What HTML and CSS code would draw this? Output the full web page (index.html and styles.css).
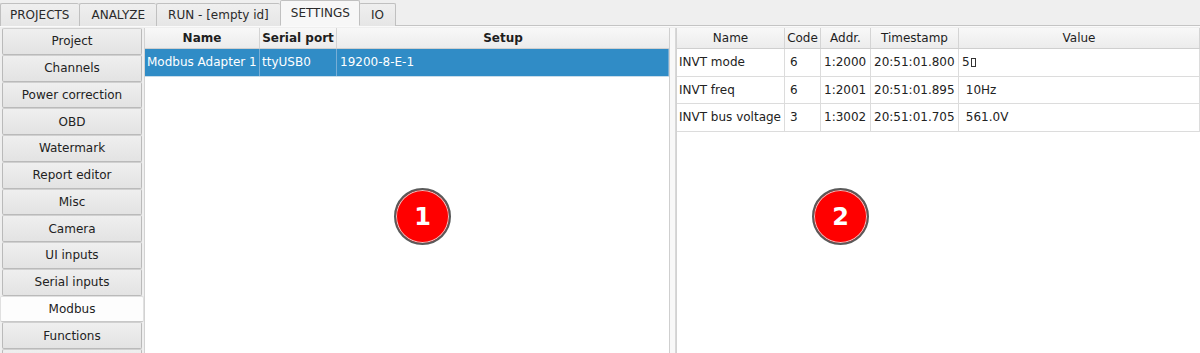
FILE: index.html
```html
<!DOCTYPE html>
<html>
<head>
<meta charset="utf-8">
<link rel="stylesheet" href="styles.css">
</head>
<body>
<div class="app">
  <div class="tabbar">
    <div class="tab first">PROJECTS</div>
    <div class="tab">ANALYZE</div>
    <div class="tab">RUN - [empty id]</div>
    <div class="tab active">SETTINGS</div>
    <div class="tab">IO</div>
  </div>
  <div class="main">
    <div class="sidebar">
      <div class="btn">Project</div>
      <div class="btn">Channels</div>
      <div class="btn">Power correction</div>
      <div class="btn">OBD</div>
      <div class="btn">Watermark</div>
      <div class="btn">Report editor</div>
      <div class="btn">Misc</div>
      <div class="btn">Camera</div>
      <div class="btn">UI inputs</div>
      <div class="btn">Serial inputs</div>
      <div class="btn sel">Modbus</div>
      <div class="btn">Functions</div>
      <div class="btn">&nbsp;</div>
    </div>
    <div class="pane left">
      <div class="row head bold">
        <div class="c l1">Name</div>
        <div class="c l2">Serial port</div>
        <div class="c l3">Setup</div>
      </div>
      <div class="row data selected">
        <div class="c l1">Modbus Adapter 1</div>
        <div class="c l2">ttyUSB0</div>
        <div class="c l3">19200-8-E-1</div>
      </div>
      <div class="badge b1">1</div>
    </div>
    <div class="splitter"></div>
    <div class="pane right">
      <div class="row head">
        <div class="c r1">Name</div>
        <div class="c r2">Code</div>
        <div class="c r3">Addr.</div>
        <div class="c r4">Timestamp</div>
        <div class="c r5">Value</div>
      </div>
      <div class="row data">
        <div class="c r1">INVT mode</div>
        <div class="c r2">6</div>
        <div class="c r3">1:2000</div>
        <div class="c r4">20:51:01.800</div>
        <div class="c r5">5<span class="box"></span></div>
      </div>
      <div class="row data">
        <div class="c r1">INVT freq</div>
        <div class="c r2">6</div>
        <div class="c r3">1:2001</div>
        <div class="c r4">20:51:01.895</div>
        <div class="c r5">&nbsp;10Hz</div>
      </div>
      <div class="row data">
        <div class="c r1">INVT bus voltage</div>
        <div class="c r2">3</div>
        <div class="c r3">1:3002</div>
        <div class="c r4">20:51:01.705</div>
        <div class="c r5">&nbsp;561.0V</div>
      </div>
      <div class="badge b2">2</div>
    </div>
  </div>
</div>
</body>
</html>
```
FILE: styles.css
```css
* { box-sizing: border-box; }
html, body { margin: 0; padding: 0; }
body {
  width: 1200px;
  height: 353px;
  overflow: hidden;
  background: #efefef;
  font-family: "DejaVu Sans", sans-serif;
  font-size: 12px;
  color: #1e1e1e;
}
.app { display: flex; flex-direction: column; height: 353px; }
.tabbar {
  display: flex;
  align-items: flex-end;
  height: 26px;
  border-bottom: 1px solid #c4c4c4;
  box-shadow: 0 1px 0 #fafafa;
}
.tab {
  height: 23px;
  padding: 0 11px;
  display: flex;
  align-items: center;
  border: 1px solid #c0c0c0;
  border-bottom: none;
  border-right: none;
  border-radius: 2px 2px 0 0;
  background: linear-gradient(#efefef, #e6e6e6);
  color: #2a2a2a;
  margin-bottom: -1px;
}
.tab.first { padding: 0 10px 0 9px; }
.tab:last-child { border-right: 1px solid #c0c0c0; padding: 0 11px; }
.tab.active {
  height: 26px;
  background: #f7f7f7;
  border-right: 1px solid #c0c0c0;
  margin-right: -1px;
  padding: 0 9px 0 10px;
  position: relative;
  z-index: 1;
  border-bottom: 1px solid #f7f7f7;
}
.main {
  flex: 1;
  display: flex;
  padding-top: 2px;
  min-height: 0;
}
.sidebar {
  width: 144px;
  padding-left: 2px;
  padding-right: 2px;
  display: flex;
  flex-direction: column;
  overflow: hidden;
}
.btn {
  flex: 0 0 26.75px;
  display: flex;
  align-items: center;
  justify-content: center;
  border: 1px solid #bababa;
  border-top-color: #d0d0d0;
  border-radius: 2px;
  background: linear-gradient(#efefef, #e3e3e3);
  color: #222;
  white-space: nowrap;
}
.btn.sel {
  background: #fdfdfd;
  margin-left: -2px;
  margin-right: -2px;
  border-color: #e0e0e0;
  border-bottom-color: #c8c8c8;
}
.pane {
  position: relative;
  background: #fff;
  border-left: 1px solid #d2d2d2;
}
.left { width: 525px; }
.right { flex: 1; }
.splitter {
  width: 7px;
  background: #f8f8f8;
  border-left: 1px solid #cfcfcf;
  border-right: 1px solid #d8d8d8;
}
.row { display: flex; }
.head {
  height: 21px;
  background: linear-gradient(#f8f8f8, #ececec);
  border-bottom: 1px solid #cfcfcf;
}
.head .c {
  justify-content: center;
  border-right: 1px solid #d4d4d4;
}
.bold { font-weight: bold; }
.data { height: 27.5px; border-bottom: 1px solid #dcdcdc; }
.data .c { border-right: 1px solid #dcdcdc; padding-left: 3px; }
.c {
  display: flex;
  align-items: center;
  white-space: nowrap;
  overflow: hidden;
}
.selected { background: #308cc6; color: #fff; border-bottom-color: #c8dcea; }
.selected .c { border-right-color: #78aed6; padding-left: 2px; }
.l1 { width: 115px; }
.l2 { width: 77px; }
.l3 { flex: 1; }
.head .l3 { border-right: none; }
.selected .l3 { padding-left: 3px; }
.r1 { width: 108px; }
.r2 { width: 36px; }
.r3 { width: 50px; }
.r4 { width: 88px; }
.r5 { flex: 1; }
.right .data .r1 { padding-left: 2px; }
.right .data .r2 { padding-left: 5px; }
.right .data .r5 { padding-left: 3px; }
.right .data { color: #222; }
.box {
  display: inline-block;
  width: 5px;
  height: 9px;
  border: 1px solid #333;
  margin-left: 1px;
}
.badge {
  position: absolute;
  width: 57px;
  height: 57px;
  border-radius: 50%;
  background: #ff0000;
  border: 2px solid #5a5a5a;
  box-shadow: inset 0 0 0 1px #e9c0c0;
  color: #fff;
  font-family: "DejaVu Sans", sans-serif;
  font-weight: bold;
  font-size: 24px;
  display: flex;
  align-items: center;
  justify-content: center;
}
.b1 { left: 249px; top: 160px; }
.b2 { left: 135px; top: 160px; }
```
